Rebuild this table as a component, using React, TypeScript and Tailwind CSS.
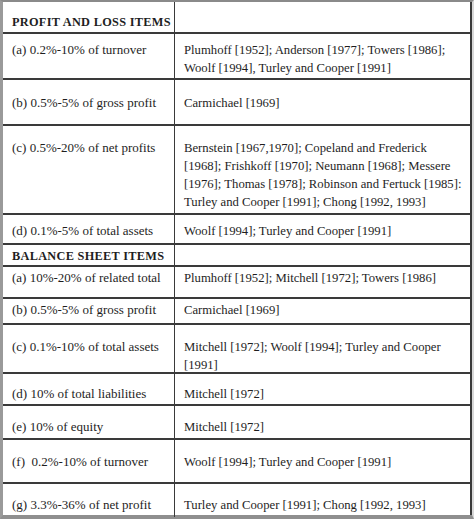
import React from "react";

type Row = {
  label: string;
  refs?: string[];
  h: number;
  pt: number;
  head?: boolean;
};

const rows: Row[] = [
  { label: "PROFIT AND LOSS ITEMS", h: 32, pt: 11, head: true },
  {
    label: "(a) 0.2%-10% of turnover",
    refs: [
      "Plumhoff [1952]; Anderson [1977]; Towers [1986];",
      "Woolf [1994], Turley and Cooper [1991]",
    ],
    h: 46,
    pt: 7,
  },
  { label: "(b) 0.5%-5% of gross profit", refs: ["Carmichael [1969]"], h: 46, pt: 14 },
  {
    label: "(c) 0.5%-20% of net profits",
    refs: [
      "Bernstein [1967,1970]; Copeland and Frederick",
      "[1968]; Frishkoff [1970]; Neumann [1968]; Messere",
      "[1976]; Thomas [1978]; Robinson and Fertuck [1985]:",
      "Turley and Cooper [1991]; Chong [1992, 1993]",
    ],
    h: 89,
    pt: 13,
  },
  {
    label: "(d) 0.1%-5% of total assets",
    refs: ["Woolf [1994]; Turley and Cooper [1991]"],
    h: 30,
    pt: 7,
  },
  { label: "BALANCE SHEET ITEMS", h: 22, pt: 2, head: true },
  {
    label: "(a) 10%-20% of related total",
    refs: ["Plumhoff [1952]; Mitchell [1972]; Towers [1986]"],
    h: 32,
    pt: 2,
  },
  { label: "(b) 0.5%-5% of gross profit", refs: ["Carmichael [1969]"], h: 26, pt: 2 },
  {
    label: "(c) 0.1%-10% of total assets",
    refs: ["Mitchell [1972]; Woolf [1994]; Turley and Cooper", "[1991]"],
    h: 49,
    pt: 13,
  },
  { label: "(d) 10% of total liabilities", refs: ["Mitchell [1972]"], h: 32, pt: 11 },
  { label: "(e) 10% of equity", refs: ["Mitchell [1972]"], h: 34, pt: 12 },
  {
    label: "(f)  0.2%-10% of turnover",
    refs: ["Woolf [1994]; Turley and Cooper [1991]"],
    h: 44,
    pt: 13,
  },
  {
    label: "(g) 3.3%-36% of net profit",
    refs: ["Turley and Cooper [1991]; Chong [1992, 1993]"],
    h: 33,
    pt: 12,
  },
];

export default function App() {
  return (
    <div className="w-[474px] h-[519px] bg-white overflow-hidden font-['Liberation_Serif',_'Times_New_Roman',_serif] leading-[18px] text-[#1e1e1e]">
      <div className="h-[519px] border-l-[3px] border-t-[2px] border-b-[4px] border-r-[2px] border-l-[#9a9a9a] border-t-[#8a8a8a] border-b-[#8f8f8f] border-r-[#d8d8d8]">
        <div className="w-[469px] h-full border-r-2 border-[#3a3a3a]">
          {rows.map((r, i) => (
            <div
              key={i}
              className={`grid grid-cols-[172px_1fr] ${
                i === rows.length - 1 ? "" : "border-b-2 border-[#3a3a3a]"
              }`}
              style={{ height: r.h }}
            >
              <div
                className="border-r border-[#3a3a3a] pl-[9px] whitespace-pre text-[13px]"
                style={{ paddingTop: r.pt }}
              >
                {r.head ? (
                  <span className="font-bold text-[12.3px] tracking-[0.3px]">
                    {r.label}
                  </span>
                ) : (
                  r.label
                )}
              </div>
              <div
                className="pl-[9px] whitespace-nowrap text-[12.7px]"
                style={{ paddingTop: r.pt }}
              >
                {r.refs?.map((t, j) => (
                  <div key={j}>{t}</div>
                ))}
              </div>
            </div>
          ))}
        </div>
      </div>
    </div>
  );
}
